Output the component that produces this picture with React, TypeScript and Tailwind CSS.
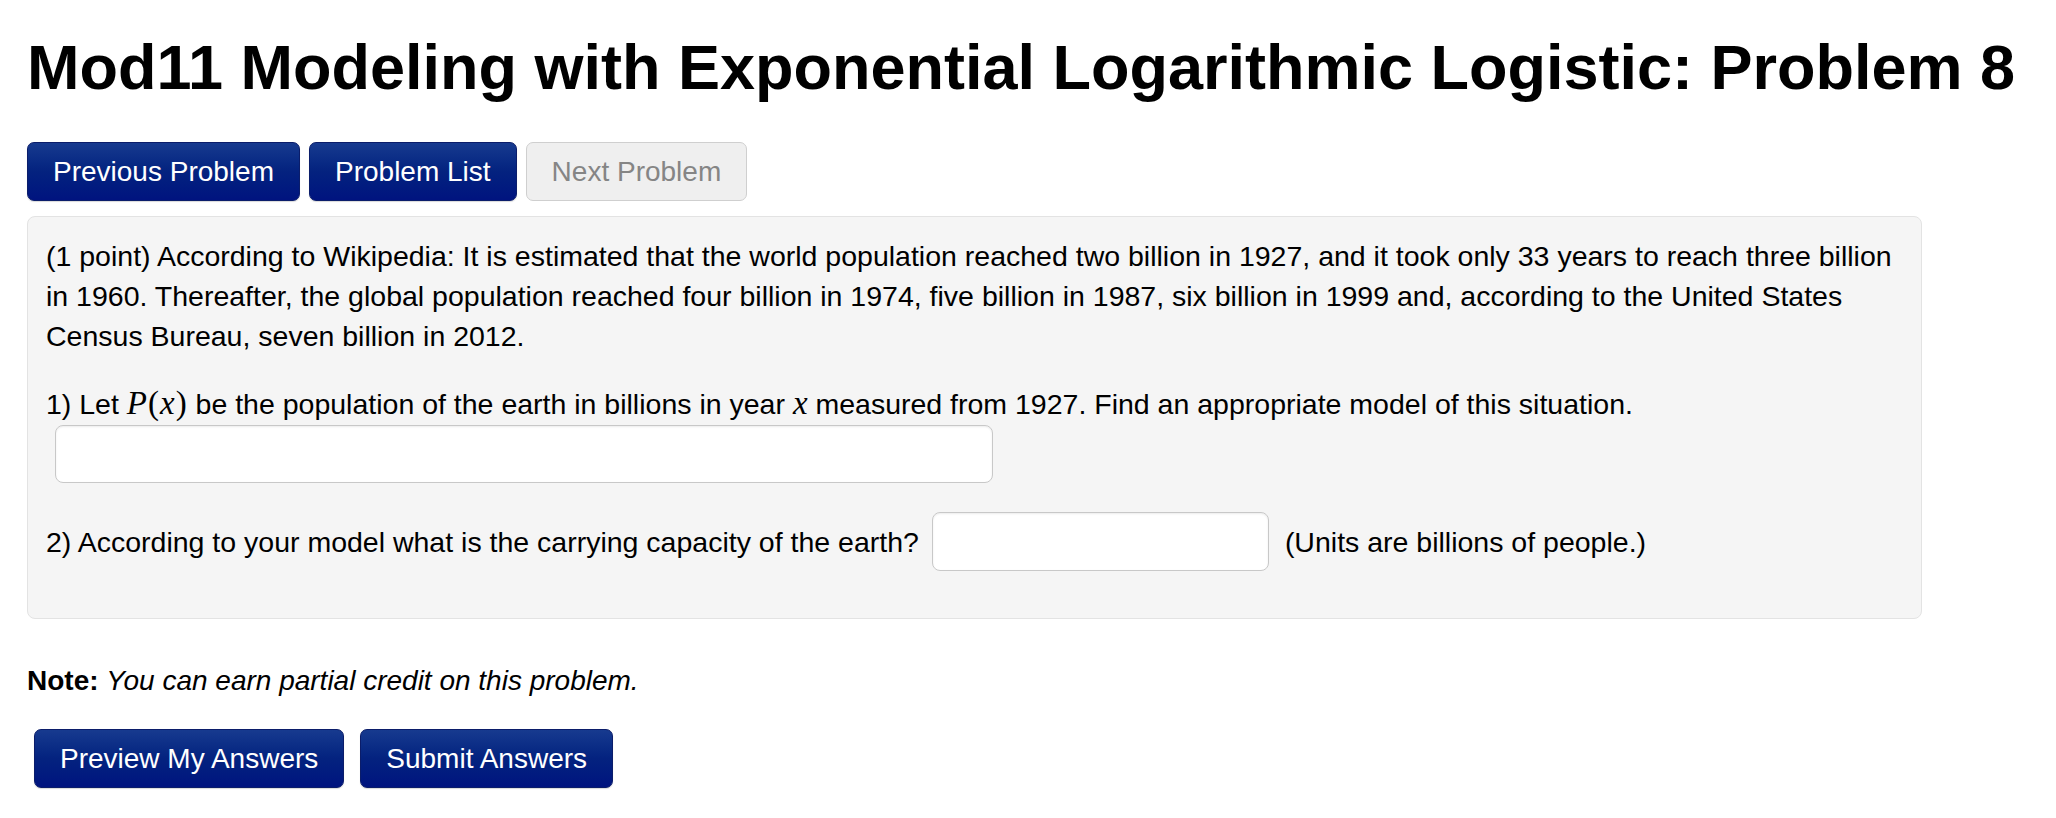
import React from 'react';

const sans = "font-['Liberation_Sans',Helvetica,Arial,sans-serif]";

function NavButton({ label, disabled }: { label: string; disabled?: boolean }) {
  if (disabled) {
    return (
      <button
        disabled
        className="h-[59px] px-[25px] text-[28px] rounded-[7px] border border-[#cfcfcf] bg-[#efefef] text-[#858585]"
      >
        {label}
      </button>
    );
  }
  return (
    <button className="h-[59px] px-[25px] text-[28px] rounded-[7px] border border-[#0b1d6a] bg-gradient-to-b from-[#173a8f] via-[#04227f] to-[#00137f] text-white shadow-[0_1px_1px_rgba(0,0,0,0.15)]">
      {label}
    </button>
  );
}

// MathJax-like math identifiers
function Mi({ children }: { children: React.ReactNode }) {
  return <span className="font-['Liberation_Serif',serif] italic text-[33px]">{children}</span>;
}

function Mo({ children }: { children: React.ReactNode }) {
  return <span className="font-['Liberation_Serif',serif] text-[33px] mx-[1px]">{children}</span>;
}

export default function App() {
  return (
    <div className={`min-h-screen bg-white text-black pl-[27px] pt-[27px] ${sans}`}>
      <h1 className="text-[63px] leading-[80px] font-bold">
        Mod11 Modeling with Exponential Logarithmic Logistic: Problem 8
      </h1>

      {/* navigation */}
      <div className="mt-[35px] flex gap-[9px]">
        <NavButton label="Previous Problem" />
        <NavButton label="Problem List" />
        <NavButton label="Next Problem" disabled />
      </div>

      {/* problem body */}
      <div className="mt-[15px] w-[1895px] rounded-[8px] border border-[#e3e3e3] bg-[#f5f5f5] pt-[19px] pb-[47px] px-[18px] text-[28.5px] leading-[40px]">
        <p>
          (1 point) According to Wikipedia: It is estimated that the world population reached two billion in 1927, and it
          took only 33 years to reach three billion in 1960. Thereafter, the global population reached four billion in
          1974, five billion in 1987, six billion in 1999 and, according to the United States Census Bureau, seven
          billion in 2012.
        </p>

        <p className="mt-[27px]">
          1) Let <Mi>P</Mi>
          <Mo>(</Mo>
          <Mi>x</Mi>
          <Mo>)</Mo> be the population of the earth in billions in year <Mi>x</Mi> measured from 1927. Find an
          appropriate model of this situation.
        </p>
        <input
          type="text"
          className="mt-[1px] ml-[9px] block h-[58px] w-[938px] rounded-[8px] border border-[#c8c8c8] bg-white shadow-[inset_0_1px_2px_rgba(0,0,0,0.08)] outline-none"
        />

        <div className="mt-[29px] flex items-center">
          <span>2) According to your model what is the carrying capacity of the earth?</span>
          <input
            type="text"
            className="ml-[13px] mr-[16px] h-[59px] w-[337px] rounded-[8px] border border-[#c8c8c8] bg-white shadow-[inset_0_1px_2px_rgba(0,0,0,0.08)] outline-none"
          />
          <span>(Units are billions of people.)</span>
        </div>
      </div>

      <p className="mt-[42px] text-[28px] leading-[40px]">
        <b>Note:</b> <i>You can earn partial credit on this problem.</i>
      </p>

      <div className="mt-[28px] ml-[7px] flex gap-[16px]">
        <NavButton label="Preview My Answers" />
        <NavButton label="Submit Answers" />
      </div>
    </div>
  );
}
